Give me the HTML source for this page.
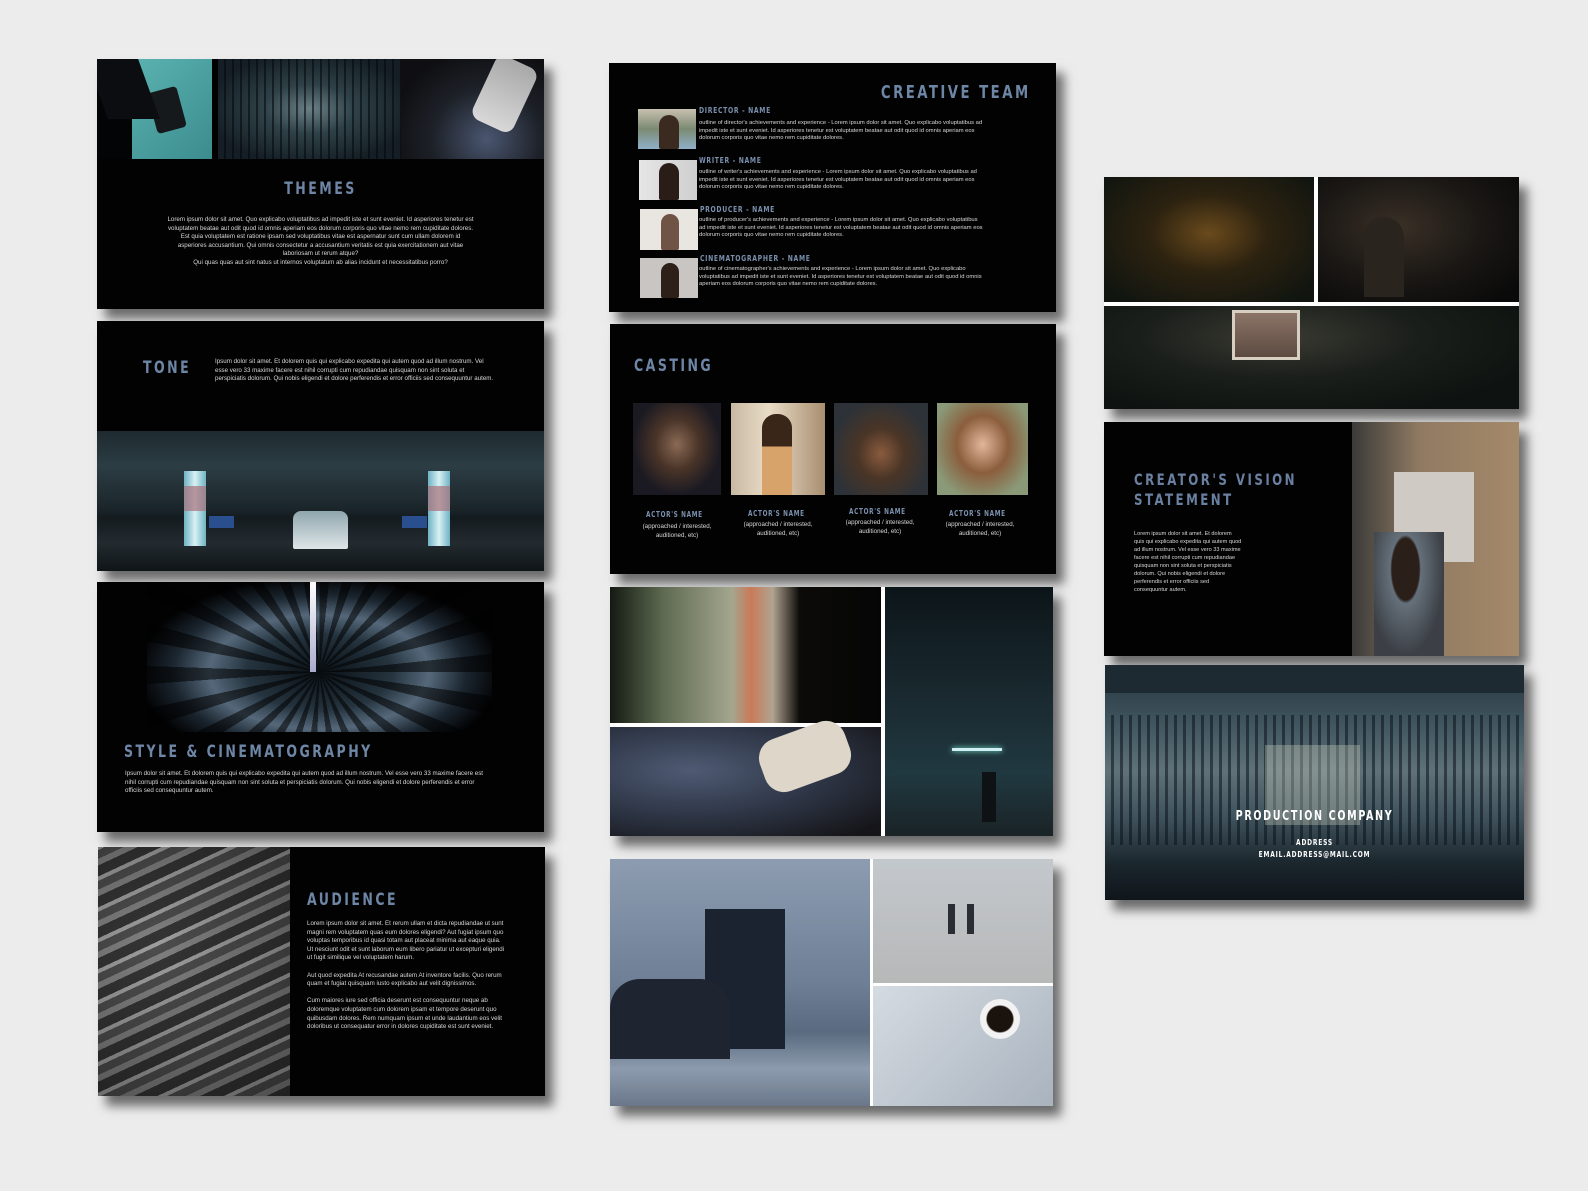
<!DOCTYPE html>
<html><head><meta charset="utf-8"><style>
*{margin:0;padding:0;box-sizing:border-box}
body{width:1588px;height:1191px;background:#ececec;position:relative;overflow:hidden;font-family:"Liberation Sans",sans-serif}
.s{position:absolute;background:#020203;box-shadow:8px 10px 10px rgba(0,0,0,.55);overflow:hidden}
.a{position:absolute}
.t{position:absolute;font-family:"DejaVu Sans Condensed","Liberation Sans Narrow",sans-serif;font-weight:bold;color:#6e86a6;letter-spacing:3px;white-space:nowrap;transform:scaleX(.82);transform-origin:left center}
.p{position:absolute;color:#d8d8d8;font-size:6.2px;line-height:8.6px}
.h{position:absolute;font-family:"DejaVu Sans Condensed",sans-serif;font-weight:bold;color:#7a90ad;font-size:8px;letter-spacing:.8px;white-space:nowrap;transform:scaleX(.85);transform-origin:left center}
</style></head><body>

<!-- THEMES -->
<div class="s" style="left:97px;top:59px;width:447px;height:250px">
 <div class="a" style="left:0;top:0;width:110px;height:100px;background:#030405"></div>
 <div class="a" style="left:35px;top:0;width:80px;height:100px;background:linear-gradient(135deg,#5ab3b0,#3c8c8e)"></div>
 <div class="a" style="left:55px;top:30px;width:30px;height:42px;background:#15191c;border-radius:4px;transform:rotate(-15deg)"></div>
 <div class="a" style="left:0;top:0;width:52px;height:60px;background:#0b0d10;transform:skewX(20deg)"></div>
 <div class="a" style="left:121px;top:0;width:183px;height:100px;background:radial-gradient(ellipse at 50% 50%,#6a7f86 0,#2f4148 35%,#141e24 80%);"></div>
 <div class="a" style="left:121px;top:0;width:183px;height:100px;background:repeating-linear-gradient(90deg,transparent 0 6px,rgba(5,10,14,.6) 6px 8px)"></div>
 <div class="a" style="left:304px;top:0;width:143px;height:100px;background:radial-gradient(ellipse at 60% 80%,#4a5670 0,#1d2128 45%,#0f0f12 80%)"></div>
 <div class="a" style="left:385px;top:0;width:45px;height:70px;background:linear-gradient(#a8a8a8,#d8d8d8);border-radius:10px;transform:rotate(25deg)"></div>
 <div class="t" style="left:0;width:447px;text-align:center;top:120px;font-size:17px;transform-origin:center">THEMES</div>
 <div class="p" style="left:70px;width:307px;top:157px;text-align:center">Lorem ipsum dolor sit amet. Quo explicabo voluptatibus ad impedit iste et sunt eveniet. Id asperiores tenetur est voluptatem beatae aut odit quod id omnis aperiam eos dolorum corporis quo vitae nemo rem cupiditate dolores. Est quia voluptatem est ratione ipsam sed voluptatibus vitae est aspernatur sunt cum ullam dolorem id asperiores accusantium. Qui omnis consectetur a accusantium veritatis est quia exercitationem aut vitae laboriosam ut rerum atque?<br>Qui quas quas aut sint natus ut internos voluptatum ab alias incidunt et necessitatibus porro?</div>
</div>

<!-- TONE -->
<div class="s" style="left:97px;top:321px;width:447px;height:250px">
 <div class="t" style="left:46px;top:37px;font-size:17px">TONE</div>
 <div class="p" style="left:118px;top:37px;width:280px">Ipsum dolor sit amet. Et dolorem quis qui explicabo expedita qui autem quod ad illum nostrum. Vel esse vero 33 maxime facere est nihil corrupti cum repudiandae quisquam non sint soluta et perspiciatis dolorum. Qui nobis eligendi et dolore perferendis et error officiis sed consequuntur autem.</div>
 <div class="a" style="left:0;top:110px;width:447px;height:140px;background:linear-gradient(#1e2a30 0,#2c3d44 25%,#1b262b 55%,#141b1f 62%,#232b30 80%,#0f1417 100%)"></div>
 <div class="a" style="left:87px;top:150px;width:22px;height:75px;background:linear-gradient(90deg,#6fb3c4,#d8f0f4 50%,#6fb3c4)"></div>
 <div class="a" style="left:331px;top:150px;width:22px;height:75px;background:linear-gradient(90deg,#6fb3c4,#d8f0f4 50%,#6fb3c4)"></div>
 <div class="a" style="left:87px;top:165px;width:22px;height:25px;background:#a8707a;opacity:.7"></div>
 <div class="a" style="left:331px;top:165px;width:22px;height:25px;background:#a8707a;opacity:.7"></div>
 <div class="a" style="left:196px;top:190px;width:55px;height:38px;background:linear-gradient(#8fa6ad,#dfe6e8);border-radius:8px 8px 2px 2px"></div>
 <div class="a" style="left:112px;top:195px;width:25px;height:12px;background:#2a4f8f"></div>
 <div class="a" style="left:305px;top:195px;width:25px;height:12px;background:#2a4f8f"></div>
</div>

<!-- STYLE -->
<div class="s" style="left:97px;top:582px;width:447px;height:250px">
 <div class="a" style="left:50px;top:0;width:345px;height:150px;background:radial-gradient(ellipse at 50% 60%,#0a0f14 0,#25343f 30%,#55687a 45%,#1b2630 60%,#020203 75%)"></div>
 <div class="a" style="left:50px;top:0;width:345px;height:150px;background:repeating-conic-gradient(from 0deg at 50% 60%,rgba(0,0,0,.55) 0 6deg,transparent 6deg 14deg)"></div>
 <div class="a" style="left:213px;top:0;width:6px;height:90px;background:linear-gradient(#fff,#aac)"></div>
 <div class="t" style="left:27px;top:160px;font-size:17px">STYLE &amp; CINEMATOGRAPHY</div>
 <div class="p" style="left:28px;top:188px;width:360px">Ipsum dolor sit amet. Et dolorem quis qui explicabo expedita qui autem quod ad illum nostrum. Vel esse vero 33 maxime facere est nihil corrupti cum repudiandae quisquam non sint soluta et perspiciatis dolorum. Qui nobis eligendi et dolore perferendis et error officiis sed consequuntur autem.</div>
</div>

<!-- AUDIENCE -->
<div class="s" style="left:98px;top:847px;width:447px;height:249px">
 <div class="a" style="left:0;top:0;width:192px;height:249px;background:repeating-linear-gradient(-25deg,#3a3a3a 0 10px,#8e8e8e 10px 16px,#555 16px 24px,#b0b0b0 24px 28px)"></div>
 <div class="a" style="left:0;top:0;width:192px;height:249px;background:radial-gradient(circle at 30% 40%,rgba(0,0,0,.1),rgba(0,0,0,.45))"></div>
 <div class="t" style="left:209px;top:43px;font-size:17px">AUDIENCE</div>
 <div class="p" style="left:209px;top:73px;width:200px">Lorem ipsum dolor sit amet. Et rerum ullam et dicta repudiandae ut sunt magni rem voluptatem quas eum dolores eligendi? Aut fugiat ipsum quo voluptas temporibus id quasi totam aut placeat minima aut eaque quia. Ut nesciunt odit et sunt laborum eum libero pariatur ut excepturi eligendi ut fugit similique vel voluptatem harum.<br><br>Aut quod expedita At recusandae autem At inventore facilis. Quo rerum quam et fugiat quisquam iusto explicabo aut velit dignissimos.<br><br>Cum maiores iure sed officia deserunt est consequuntur neque ab doloremque voluptatem cum dolorem ipsam et tempore deserunt quo quibusdam dolores. Rem numquam ipsum et unde laudantium eos velit doloribus ut consequatur error in dolores cupiditate est sunt eveniet.</div>
</div>

<!-- CREATIVE TEAM -->
<div class="s" style="left:609px;top:63px;width:447px;height:249px">
 <div class="t" style="right:25px;top:19px;font-size:18px;transform-origin:right center">CREATIVE TEAM</div>
 <div class="a" style="left:29px;top:46px;width:58px;height:40px;background:linear-gradient(#c9c0b0,#7a8a72 50%,#8fb0c8)"></div>
 <div class="a" style="left:30px;top:97px;width:58px;height:40px;background:linear-gradient(90deg,#e6e6e6,#cfcfcf)"></div>
 <div class="a" style="left:31px;top:146px;width:58px;height:41px;background:#e9e6e2"></div>
 <div class="a" style="left:31px;top:195px;width:58px;height:40px;background:#c9c5c2"></div>
 <div class="a" style="left:50px;top:52px;width:20px;height:34px;background:#3b2a20;border-radius:10px 10px 2px 2px"></div>
 <div class="a" style="left:50px;top:100px;width:20px;height:37px;background:#2a1d17;border-radius:10px 10px 2px 2px"></div>
 <div class="a" style="left:52px;top:151px;width:18px;height:36px;background:#6f5446;border-radius:9px 9px 2px 2px"></div>
 <div class="a" style="left:52px;top:200px;width:18px;height:35px;background:#2c2019;border-radius:9px 9px 2px 2px"></div>
 <div class="h" style="left:90px;top:43px">DIRECTOR - NAME</div>
 <div class="p" style="left:90px;top:57px;width:285px;font-size:5.8px;line-height:7.5px">outline of director's achievements and experience - Lorem ipsum dolor sit amet. Quo explicabo voluptatibus ad impedit iste et sunt eveniet. Id asperiores tenetur est voluptatem beatae aut odit quod id omnis aperiam eos dolorum corporis quo vitae nemo rem cupiditate dolores.</div>
 <div class="h" style="left:90px;top:93px">WRITER - NAME</div>
 <div class="p" style="left:90px;top:106px;width:285px;font-size:5.8px;line-height:7.5px">outline of writer's achievements and experience - Lorem ipsum dolor sit amet. Quo explicabo voluptatibus ad impedit iste et sunt eveniet. Id asperiores tenetur est voluptatem beatae aut odit quod id omnis aperiam eos dolorum corporis quo vitae nemo rem cupiditate dolores.</div>
 <div class="h" style="left:91px;top:142px">PRODUCER - NAME</div>
 <div class="p" style="left:90px;top:154px;width:285px;font-size:5.8px;line-height:7.5px">outline of producer's achievements and experience - Lorem ipsum dolor sit amet. Quo explicabo voluptatibus ad impedit iste et sunt eveniet. Id asperiores tenetur est voluptatem beatae aut odit quod id omnis aperiam eos dolorum corporis quo vitae nemo rem cupiditate dolores.</div>
 <div class="h" style="left:91px;top:191px">CINEMATOGRAPHER - NAME</div>
 <div class="p" style="left:90px;top:203px;width:285px;font-size:5.8px;line-height:7.5px">outline of cinematographer's achievements and experience - Lorem ipsum dolor sit amet. Quo explicabo voluptatibus ad impedit iste et sunt eveniet. Id asperiores tenetur est voluptatem beatae aut odit quod id omnis aperiam eos dolorum corporis quo vitae nemo rem cupiditate dolores.</div>
</div>

<!-- CASTING -->
<div class="s" style="left:610px;top:324px;width:446px;height:250px">
 <div class="t" style="left:24px;top:32px;font-size:17px">CASTING</div>
 <div class="a" style="left:23px;top:79px;width:88px;height:92px;background:radial-gradient(ellipse at 50% 45%,#8a6a55 0,#4a3428 35%,#1b1a22 70%)"></div>
 <div class="a" style="left:121px;top:79px;width:94px;height:92px;background:linear-gradient(90deg,#c8b9a2,#e9dcc7 40%,#a88e70)"></div>
 <div class="a" style="left:152px;top:90px;width:30px;height:81px;background:linear-gradient(#3a2519 0 40%,#d8a36a 40%);border-radius:14px 14px 0 0"></div>
 <div class="a" style="left:224px;top:79px;width:94px;height:92px;background:radial-gradient(ellipse at 50% 55%,#8a5b3e 0,#4a3526 35%,#2d3238 75%)"></div>
 <div class="a" style="left:327px;top:79px;width:91px;height:92px;background:radial-gradient(ellipse at 50% 45%,#e2b69a 0,#8b5e3d 40%,#8a9a78 80%)"></div>
 <div class="h" style="left:36px;top:186px;font-size:7.5px">ACTOR'S NAME</div>
 <div class="p" style="left:23px;top:199px;width:88px;text-align:center">(approached / interested, auditioned, etc)</div>
 <div class="h" style="left:138px;top:185px;font-size:7.5px">ACTOR'S NAME</div>
 <div class="p" style="left:124px;top:197px;width:88px;text-align:center">(approached / interested, auditioned, etc)</div>
 <div class="h" style="left:239px;top:183px;font-size:7.5px">ACTOR'S NAME</div>
 <div class="p" style="left:226px;top:195px;width:88px;text-align:center">(approached / interested, auditioned, etc)</div>
 <div class="h" style="left:339px;top:185px;font-size:7.5px">ACTOR'S NAME</div>
 <div class="p" style="left:326px;top:197px;width:88px;text-align:center">(approached / interested, auditioned, etc)</div>
</div>

<!-- COLLAGE 1 -->
<div class="s" style="left:610px;top:587px;width:443px;height:249px;background:#fff">
 <div class="a" style="left:0;top:0;width:271px;height:136px;background:linear-gradient(90deg,#141a12 0,#5f6b52 20%,#a4a68e 45%,#c97a58 52%,#b0a390 60%,#0c0b09 70%,#050505 100%)"></div>
 <div class="a" style="left:0;top:140px;width:271px;height:109px;background:radial-gradient(ellipse at 30% 40%,#4f5a73 0,#2d3545 50%,#16161a 90%)"></div>
 <div class="a" style="left:150px;top:142px;width:90px;height:55px;background:#ddd6c9;border-radius:20px;transform:rotate(-20deg)"></div>
 <div class="a" style="left:275px;top:0;width:168px;height:249px;background:linear-gradient(#0c1519 0,#1a2a30 45%,#203840 75%,#1a2326 100%)"></div>
 <div class="a" style="left:342px;top:161px;width:50px;height:3px;background:#cfeef5;box-shadow:0 0 6px #8fd"></div>
 <div class="a" style="left:372px;top:185px;width:14px;height:50px;background:#0f1214"></div>
</div>

<!-- COLLAGE 2 -->
<div class="s" style="left:610px;top:859px;width:443px;height:247px;background:#fff">
 <div class="a" style="left:0;top:0;width:260px;height:247px;background:linear-gradient(#8d9cb0 0,#6e7f96 50%,#5a6a7f 70%,#8c9bad 85%,#6a778a 100%)"></div>
 <div class="a" style="left:95px;top:50px;width:80px;height:140px;background:#1b2230"></div>
 <div class="a" style="left:0;top:120px;width:120px;height:80px;background:#1e2430;border-radius:30px 30px 0 0"></div>
 <div class="a" style="left:263px;top:0;width:180px;height:124px;background:linear-gradient(#c3c8cd,#b7b8b8)"></div>
 <div class="a" style="left:338px;top:45px;width:7px;height:30px;background:#2a2d33"></div>
 <div class="a" style="left:357px;top:45px;width:7px;height:30px;background:#2a2d33"></div>
 <div class="a" style="left:263px;top:127px;width:180px;height:120px;background:linear-gradient(135deg,#d5dbe2,#a9b3be)"></div>
 <div class="a" style="left:370px;top:140px;width:40px;height:40px;border-radius:50%;background:radial-gradient(#1a120c 45%,#f2f2f2 50%)"></div>
</div>

<!-- RIGHT TOP COLLAGE -->
<div class="s" style="left:1104px;top:177px;width:415px;height:232px;background:#fff">
 <div class="a" style="left:0;top:0;width:210px;height:125px;background:radial-gradient(ellipse at 50% 45%,#6a4a1c 0,#2c2210 40%,#101510 90%)"></div>
 <div class="a" style="left:214px;top:0;width:201px;height:125px;background:radial-gradient(ellipse at 40% 40%,#3a3026 0,#1a1714 50%,#0a0a0a 90%)"></div>
 <div class="a" style="left:260px;top:40px;width:40px;height:80px;background:#2a241f;border-radius:20px 20px 0 0"></div>
 <div class="a" style="left:0;top:129px;width:415px;height:103px;background:radial-gradient(ellipse at 42% 30%,#3a3a32 0,#1b1f1b 40%,#0e1210 80%)"></div>
 <div class="a" style="left:128px;top:133px;width:68px;height:50px;background:linear-gradient(#8c7468,#5c4a40);border:3px solid #d6cfc2"></div>
</div>

<!-- CREATOR'S VISION -->
<div class="s" style="left:1104px;top:422px;width:415px;height:234px">
 <div class="t" style="left:30px;top:48px;font-size:16px;line-height:20px;color:#6a80a0">CREATOR'S VISION<br>STATEMENT</div>
 <div class="p" style="left:30px;top:108px;width:108px;font-size:5.6px;line-height:8px">Lorem ipsum dolor sit amet. Et dolorem quis qui explicabo expedita qui autem quod ad illum nostrum. Vel esse vero 33 maxime facere est nihil corrupti cum repudiandae quisquam non sint soluta et perspiciatis dolorum. Qui nobis eligendi et dolore perferendis et error officiis sed consequuntur autem.</div>
 <div class="a" style="left:248px;top:0;width:167px;height:234px;background:linear-gradient(90deg,#3a3a38 0,#8f7a62 40%,#a5896a 100%)"></div>
 <div class="a" style="left:290px;top:50px;width:80px;height:90px;background:#cfcbc4"></div>
 <div class="a" style="left:270px;top:110px;width:70px;height:124px;background:radial-gradient(ellipse at 45% 30%,#2a1f19 0 25%,#65707a 28%,#3c4046 70%)"></div>
</div>

<!-- PRODUCTION -->
<div class="s" style="left:1105px;top:665px;width:419px;height:235px;background:linear-gradient(#25343d 0,#40555f 25%,#5f7279 45%,#3f525c 65%,#1a252c 85%,#0f161b 100%)">
 <div class="a" style="left:0;top:50px;width:419px;height:130px;background:repeating-linear-gradient(90deg,transparent 0 6px,rgba(10,18,24,.55) 6px 9px)"></div>
 <div class="a" style="left:160px;top:80px;width:95px;height:80px;background:rgba(200,205,190,.35)"></div>
 <div class="a" style="left:0;top:0;width:419px;height:28px;background:#1e2a31"></div>
 <div class="t" style="left:0;width:419px;text-align:center;top:144px;font-size:13px;color:#fff;letter-spacing:2px;transform-origin:center">PRODUCTION COMPANY</div>
 <div class="t" style="left:0;width:419px;text-align:center;top:173px;font-size:8px;color:#fff;letter-spacing:1px;transform-origin:center">ADDRESS</div>
 <div class="t" style="left:0;width:419px;text-align:center;top:185px;font-size:8px;color:#fff;letter-spacing:1px;transform-origin:center">EMAIL.ADDRESS@MAIL.COM</div>
</div>

</body></html>
